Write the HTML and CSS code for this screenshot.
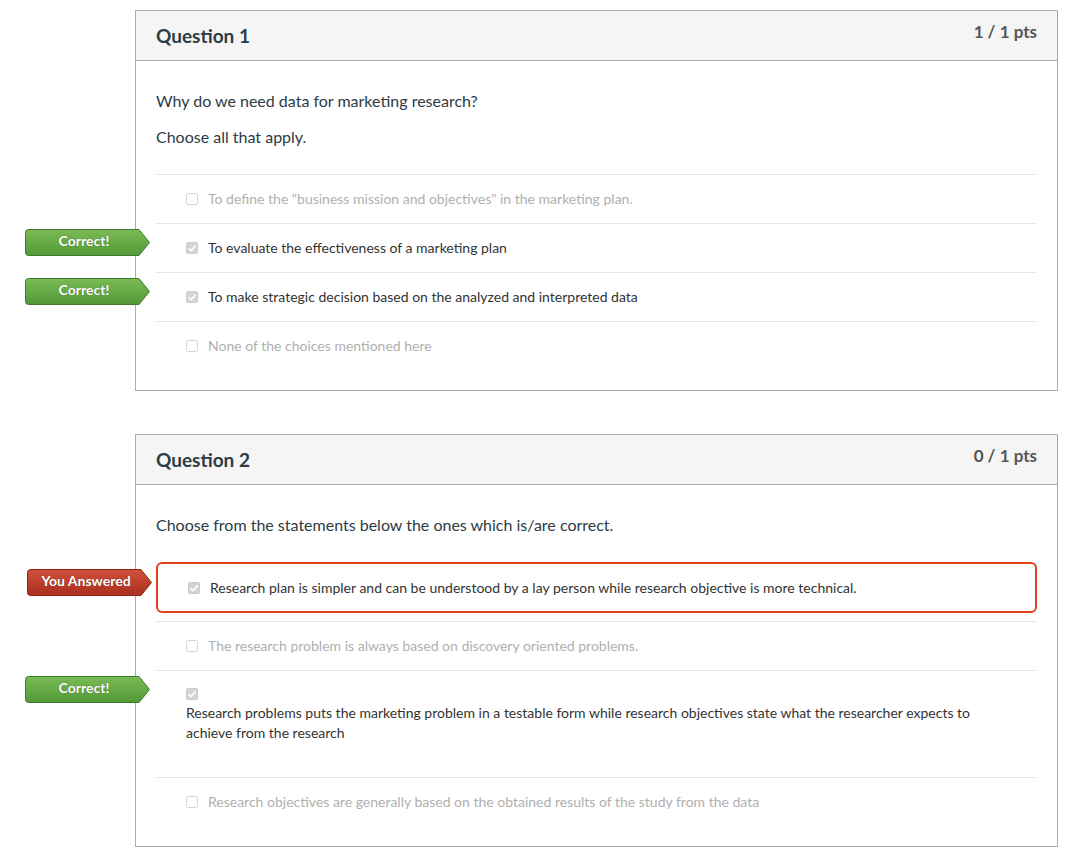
FILE: index.html
```html
<!DOCTYPE html>
<html>
<head>
    <link rel="stylesheet" href="styles.css">
</head>
<body>
    <div class="page">
        <div class="question">
            <div class="question-header">
                <h2 class="question-title">Question 1</h2>
                <span class="question-points">1 / 1 pts</span>
            </div>
            <div class="question-body">
                <p class="question-text">Why do we need data for marketing research?</p>
                <p class="question-text last">Choose all that apply.</p>
                <div class="answers">
                    <div class="answer">
                        <span class="check"></span>
                        <span class="answer-text">To define the "business mission and objectives" in the marketing plan.</span>
                    </div>
                    <div class="answer selected">
                        <span class="badge correct">
                            <svg width="125" height="27" viewBox="0 0 125 27">
                                <defs>
                                    <linearGradient id="g1" x1="0" y1="0" x2="0" y2="1">
                                        <stop offset="0" stop-color="#7bbb55"/>
                                        <stop offset="1" stop-color="#539838"/>
                                    </linearGradient>
                                </defs>
                                <path d="M3.5 0.5 H114 L124.5 13.5 L114 26.5 H3.5 Q0.5 26.5 0.5 23.5 V3.5 Q0.5 0.5 3.5 0.5 Z" fill="url(#g1)" stroke="#3e7a29"/>
                            </svg>
                            <span class="badge-label">Correct!</span>
                        </span>
                        <span class="check checked"><svg width="12" height="12" viewBox="0 0 12 12"><path d="M2.6 6.2 L5 8.6 L9.6 3.6" fill="none" stroke="#fff" stroke-width="1.6"/></svg></span>
                        <span class="answer-text">To evaluate the effectiveness of a marketing plan</span>
                    </div>
                    <div class="answer selected">
                        <span class="badge correct">
                            <svg width="125" height="27" viewBox="0 0 125 27">
                                <path d="M3.5 0.5 H114 L124.5 13.5 L114 26.5 H3.5 Q0.5 26.5 0.5 23.5 V3.5 Q0.5 0.5 3.5 0.5 Z" fill="url(#g1)" stroke="#3e7a29"/>
                            </svg>
                            <span class="badge-label">Correct!</span>
                        </span>
                        <span class="check checked"><svg width="12" height="12" viewBox="0 0 12 12"><path d="M2.6 6.2 L5 8.6 L9.6 3.6" fill="none" stroke="#fff" stroke-width="1.6"/></svg></span>
                        <span class="answer-text">To make strategic decision based on the analyzed and interpreted data</span>
                    </div>
                    <div class="answer">
                        <span class="check"></span>
                        <span class="answer-text">None of the choices mentioned here</span>
                    </div>
                </div>
            </div>
        </div>

        <div class="question">
            <div class="question-header">
                <h2 class="question-title">Question 2</h2>
                <span class="question-points">0 / 1 pts</span>
            </div>
            <div class="question-body">
                <p class="question-text last">Choose from the statements below the ones which is/are correct.</p>
                <div class="answers">
                    <div class="answer selected wrong">
                        <span class="badge">
                            <svg width="125" height="27" viewBox="0 0 125 27">
                                <defs>
                                    <linearGradient id="g2" x1="0" y1="0" x2="0" y2="1">
                                        <stop offset="0" stop-color="#d0503c"/>
                                        <stop offset="1" stop-color="#aa2f1e"/>
                                    </linearGradient>
                                </defs>
                                <path d="M3.5 0.5 H114 L124.5 13.5 L114 26.5 H3.5 Q0.5 26.5 0.5 23.5 V3.5 Q0.5 0.5 3.5 0.5 Z" fill="url(#g2)" stroke="#8c2516"/>
                            </svg>
                            <span class="badge-label">You Answered</span>
                        </span>
                        <span class="check checked"><svg width="12" height="12" viewBox="0 0 12 12"><path d="M2.6 6.2 L5 8.6 L9.6 3.6" fill="none" stroke="#fff" stroke-width="1.6"/></svg></span>
                        <span class="answer-text">Research plan is simpler and can be understood by a lay person while research objective is more technical.</span>
                    </div>
                    <div class="answer">
                        <span class="check"></span>
                        <span class="answer-text">The research problem is always based on discovery oriented problems.</span>
                    </div>
                    <div class="answer stacked">
                        <span class="badge correct">
                            <svg width="125" height="27" viewBox="0 0 125 27">
                                <path d="M3.5 0.5 H114 L124.5 13.5 L114 26.5 H3.5 Q0.5 26.5 0.5 23.5 V3.5 Q0.5 0.5 3.5 0.5 Z" fill="url(#g1)" stroke="#3e7a29"/>
                            </svg>
                            <span class="badge-label">Correct!</span>
                        </span>
                        <span class="check checked"><svg width="12" height="12" viewBox="0 0 12 12"><path d="M2.6 6.2 L5 8.6 L9.6 3.6" fill="none" stroke="#fff" stroke-width="1.6"/></svg></span>
                        <span class="answer-text">Research problems puts the marketing problem in a testable form while research objectives state what the researcher expects to achieve from the research</span>
                    </div>
                    <div class="answer">
                        <span class="check"></span>
                        <span class="answer-text">Research objectives are generally based on the obtained results of the study from the data</span>
                    </div>
                </div>
            </div>
        </div>
    </div>
</body>
</html>
```

FILE: styles.css
```css
body {
    margin: 0;
    background: #ffffff;
    font-family: Lato, "Open Sans", Arial, sans-serif;
    color: #2d3b45;
}

.page {
    padding: 10px 0 0 135px;
    width: 923px;
}

.question {
    border: 1px solid #aaaaaa;
    margin-bottom: 43px;
}

.question-header {
    display: flex;
    justify-content: space-between;
    align-items: flex-start;
    background: #f5f5f5;
    border-bottom: 1px solid #aaaaaa;
    height: 49px;
    padding: 0 20px;
}

.question-title {
    margin: 0;
    padding-top: 14px;
    font-size: 19px;
    line-height: 22px;
    font-weight: bold;
    color: #2d3b45;
}

.question-points {
    padding-top: 10px;
    font-size: 17px;
    line-height: 22px;
    font-weight: bold;
    color: #555555;
}

.question-body {
    padding: 29px 20px 20px;
}

.question-text {
    margin: 0 0 14px;
    font-size: 16px;
    line-height: 22px;
}

.question-text.last {
    margin-bottom: 26px;
}

.answer {
    position: relative;
    display: flex;
    align-items: center;
    border-top: 1px solid #e6e6e6;
    padding: 14px 0 14px 30px;
    font-size: 14px;
    line-height: 20px;
    color: #b0b0b0;
}

.answer.selected {
    color: #333333;
}

.answer.wrong {
    border: 2px solid #e2401f;
    border-radius: 6px;
    padding: 14px 0 13px 30px;
    margin-bottom: 8px;
}

.answer.stacked {
    display: block;
    padding: 17px 50px 34px 30px;
    color: #333333;
}

.answer.stacked .check {
    display: block;
}

.answer.stacked .answer-text {
    display: block;
    margin-top: 3px;
}

.check {
    flex: none;
    width: 12px;
    height: 12px;
    box-sizing: border-box;
    border: 1px solid #d6d6d6;
    border-radius: 2px;
    background: #ffffff;
    margin-right: 10px;
}

.check.checked {
    background: #d4d4d4;
    border-color: #cccccc;
}

.check svg {
    display: block;
    margin: -1px;
}

.badge {
    position: absolute;
    left: -131px;
    top: 5px;
    width: 125px;
    height: 27px;
}

.answer.wrong .badge {
    left: -131px;
    top: 5px;
}

.badge svg {
    position: absolute;
    left: 0;
    top: 0;
}

.badge-label {
    position: relative;
    display: block;
    width: 118px;
    text-align: center;
    font-size: 14px;
    line-height: 24px;
    font-weight: bold;
    color: #ffffff;
    text-shadow: 0 0 1px rgba(0, 0, 0, 0.4);
}
```
